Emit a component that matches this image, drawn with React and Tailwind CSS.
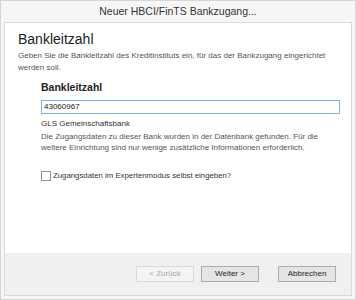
export default function App() {
  const font = { fontFamily: '"Liberation Sans", Arial, sans-serif' };

  return (
    <div
      className="w-[356px] h-[300px] bg-[#f6f6f6] border border-[#d6d6d6] flex flex-col text-[#333]"
      style={font}
    >
      {/* Title bar */}
      <div className="h-[21px] flex items-center justify-center text-[10.5px] text-[#333]">
        Neuer HBCI/FinTS Bankzugang...
      </div>

      {/* Wizard body */}
      <div className="mx-[3px] mb-[3px] flex-1 flex flex-col border border-[#dadada] bg-white">
        <div className="flex-1 pl-[13px] pr-[11px] pt-[7px]">
          <h1 className="text-[14px] leading-[18px] text-[#222]">Bankleitzahl</h1>
          <p className="mt-[2px] text-[8px] leading-[12px] text-[#555]">
            Geben Sie die Bankleitzahl des Kreditinstituts ein, für das der Bankzugang eingerichtet
            <br />
            werden soll.
          </p>

          <div className="pl-[23px] mt-[6px]">
            <h2 className="font-bold text-[10.5px] leading-[14px] text-[#222]">Bankleitzahl</h2>
            <div className="mt-[6px] h-[14px] border border-[#7eb4ea] flex items-center px-[2px] text-[8px] text-[#222]">
              43060967
            </div>
            <div className="mt-[4px] text-[8px] leading-[12px] text-[#333]">GLS Gemeinschaftsbank</div>
            <p className="mt-[1px] text-[8px] leading-[11px] text-[#555]">
              Die Zugangsdaten zu dieser Bank wurden in der Datenbank gefunden. Für die
              <br />
              weitere Einrichtung sind nur wenige zusätzliche Informationen erforderlich.
            </p>

            <label className="mt-[17px] flex items-center gap-[2px] text-[7.8px] leading-[12px] text-[#333]">
              <span className="w-[10px] h-[10px] border border-[#8f8f8f] bg-white"></span>
              Zugangsdaten im Expertenmodus selbst eingeben?
            </label>
          </div>
        </div>

        {/* Footer */}
        <div className="h-[42px] bg-[#f0f0f0] flex items-center justify-end pr-[15px]">
          <button className="w-[58px] h-[16px] border border-[#d9d9d9] bg-[#f4f4f4] text-[8px] text-[#a6a6a6]">
            &lt; Zurück
          </button>
          <button className="ml-[7px] w-[58px] h-[16px] border border-[#adadad] bg-[#e5e5e5] text-[8px] text-[#222]">
            Weiter &gt;
          </button>
          <button className="ml-[19px] w-[58px] h-[16px] border border-[#adadad] bg-[#e5e5e5] text-[8px] text-[#222]">
            Abbrechen
          </button>
        </div>
      </div>
    </div>
  );
}
